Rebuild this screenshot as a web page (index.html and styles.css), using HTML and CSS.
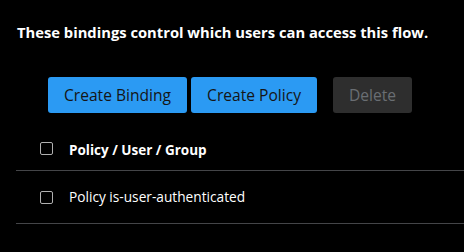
FILE: index.html
```html
<!DOCTYPE html>
<html>
<head>
<meta charset="utf-8">
<link rel="stylesheet" href="styles.css">
</head>
<body>
<div class="page">
  <p class="intro">These bindings control which users can access this flow.</p>
  <div class="toolbar">
    <div class="group">
      <button class="btn primary">Create Binding</button>
      <button class="btn primary">Create Policy</button>
    </div>
    <button class="btn disabled" disabled>Delete</button>
  </div>
  <div class="table">
    <div class="row head">
      <span class="check"></span>
      <span class="cell">Policy / User / Group</span>
    </div>
    <div class="row">
      <span class="check"></span>
      <span class="cell">Policy is-user-authenticated</span>
    </div>
  </div>
</div>
</body>
</html>
```

FILE: styles.css
```css
html, body {
  margin: 0;
  background: #000;
}
.page {
  font-family: "Open Sans", "Noto Sans", sans-serif;
  color: #fff;
  padding-top: 22px;
}
.intro {
  margin: 0 0 0 17px;
  font-size: 14.75px;
  font-weight: 700;
  line-height: 20px;
}
.toolbar {
  display: flex;
  margin: 35px 0 0 48px;
  gap: 16px;
}
.group {
  display: flex;
  gap: 4px;
}
.btn {
  font-family: inherit;
  font-size: 15.6px;
  height: 36px;
  padding: 0 16px;
  border: none;
  border-radius: 3px;
  line-height: 36px;
}
.btn.primary {
  background: #2b9af3;
  color: #151515;
}
.btn.disabled {
  background: #2e2e2e;
  color: #6a6e73;
  width: 79px;
}
.table {
  margin: 17px 0 0 16px;
}
.row {
  display: flex;
  align-items: center;
  height: 52px;
  border-bottom: 1px solid #444548;
  padding-left: 24px;
  font-size: 13.7px;
}
.row.head {
  height: 40px;
  font-weight: 700;
  font-size: 13.5px;
}
.check {
  width: 11px;
  height: 11px;
  border: 1px solid #b0b0b0;
  border-radius: 2px;
  margin-right: 16px;
  flex: none;
}
.row.head .check { margin-top: -4px; }
.cell { line-height: 20px; }
```
